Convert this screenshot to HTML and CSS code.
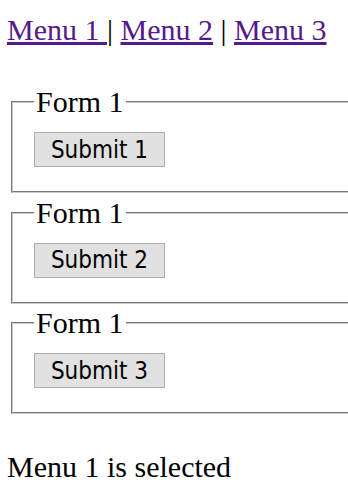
FILE: index.html
```html
<!DOCTYPE html>
<html>
<head>
<meta charset="utf-8">
<link rel="stylesheet" href="styles.css">
</head>
<body>
<div class="page">
  <div class="nav"><a href="#m1" class="link">Menu 1 </a>| <a href="#m2" class="link">Menu 2</a> | <a href="#m3" class="link">Menu 3</a></div>
  <div class="forms">
    <form class="form">
      <fieldset class="box">
        <legend class="legend">Form 1</legend>
        <button type="button" class="btn">Submit 1</button>
      </fieldset>
    </form>
    <form class="form">
      <fieldset class="box">
        <legend class="legend">Form 1</legend>
        <button type="button" class="btn">Submit 2</button>
      </fieldset>
    </form>
    <form class="form">
      <fieldset class="box">
        <legend class="legend">Form 1</legend>
        <button type="button" class="btn">Submit 3</button>
      </fieldset>
    </form>
  </div>
  <div class="status">Menu 1 is selected</div>
</div>
</body>
</html>
```
FILE: styles.css
```css
html, body {
  margin: 0;
  padding: 0;
  background: #ffffff;
  overflow: hidden;
}
.page {
  padding: 13px 0 0 7px;
  font-family: "Liberation Serif", "Times New Roman", serif;
  font-size: 30px;
  line-height: 34px;
  color: #000000;
}
.nav {
  height: 34px;
  white-space: nowrap;
}
.link {
  color: #551a8b;
  text-decoration: underline;
}
.forms {
  margin-top: 38px;
}
.form {
  margin: 0;
}
.box {
  margin: 0 -80px 2.5px 4px;
  border: 2px groove #cccccc;
  padding: 13px 21px 24px 21px;
}
.legend {
  padding: 0 2px;
  font-size: 30px;
  line-height: 34px;
}
.btn {
  display: block;
  width: 131px;
  height: 35px;
  padding: 0;
  border: 1px solid #adadad;
  background: #e1e1e1;
  font-family: "DejaVu Sans Condensed", "DejaVu Sans", Verdana, sans-serif;
  font-size: 24px;
  color: #000000;
  border-radius: 0;
  text-align: center;
}
.status {
  margin-top: 36px;
}
```
